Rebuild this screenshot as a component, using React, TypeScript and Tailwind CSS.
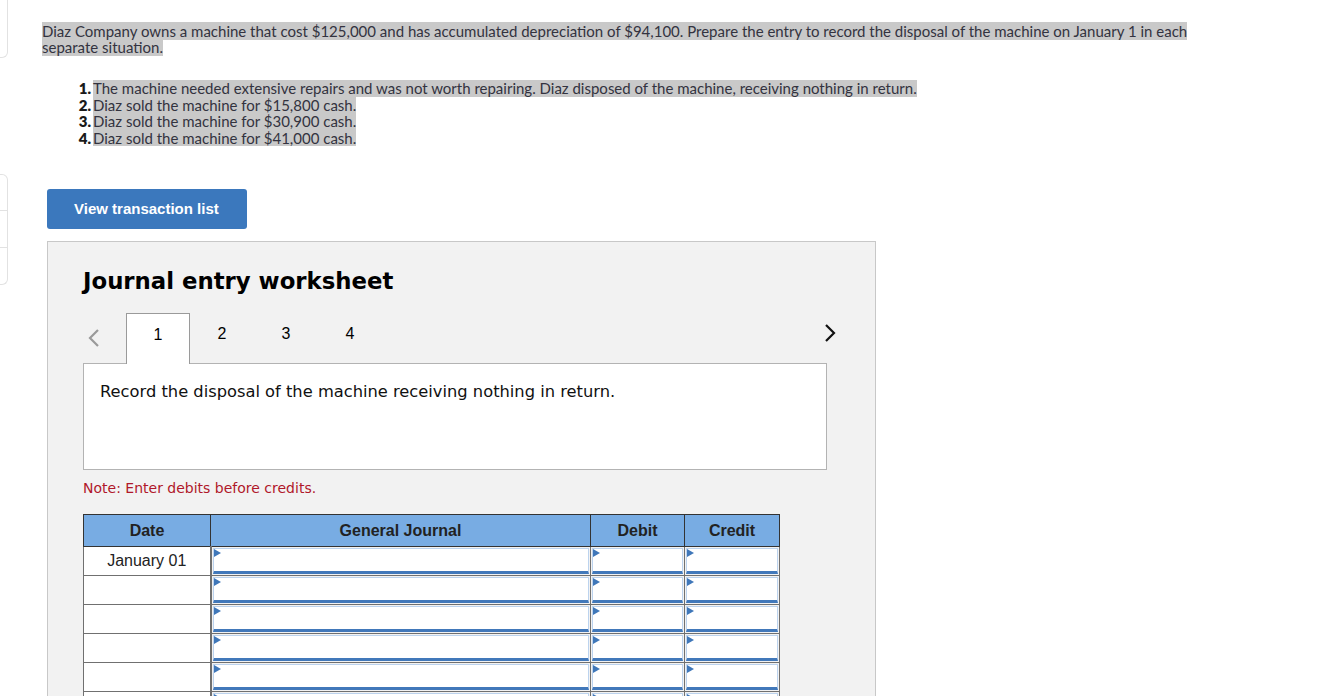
import React from "react";

const Tri = () => (
  <span className="absolute left-0 top-0 w-0 h-0 border-t-[4px] border-b-[4px] border-l-[7px] border-t-transparent border-b-transparent border-l-[#3f77b9]" />
);

const InputCell = () => (
  <td className="border border-[#707070] p-[1px] h-[28.6px] align-top">
    <div className="relative h-[26px] bg-white border border-[#bcd3ee] border-b-[3px] border-b-[#4178ba]">
      <Tri />
    </div>
  </td>
);

export default function App() {
  const rows = [0, 1, 2, 3, 4, 5];
  return (
    <div className="relative w-[1338px] h-[696px] overflow-hidden bg-white">
      {/* left edge tabs */}
      <div className="absolute left-0 top-[-10px] w-[8px] h-[68px] border border-l-0 border-[#e2e2e2] rounded-br-[6px]" />
      <div className="absolute left-0 top-[174px] w-[8px] flex flex-col">
        <div className="h-[37px] border border-l-0 border-[#e2e2e2] rounded-tr-[6px]" />
        <div className="h-[37px] border border-l-0 border-t-0 border-[#e2e2e2]" />
        <div className="h-[37px] border border-l-0 border-t-0 border-[#e2e2e2] rounded-br-[6px]" />
      </div>

      <div className="pl-[42px] pt-[23px]">
        <p
          className="w-[1148px] text-[15px] leading-[16px] text-[#333340]"
          style={{ fontFamily: "Lato, 'Open Sans', sans-serif" }}
        >
          <span className="bg-[#c9c9c9]">
            <span className="relative">
              Diaz Company owns a machine that cost $125,000 and has accumulated depreciation of $94,100. Prepare the entry to record the disposal of the machine on January 1 in each separate situation.
            </span>
          </span>
        </p>

        <div
          className="mt-[25px] flex flex-col text-[15px] leading-[16.6px] text-[#333340]"
          style={{ fontFamily: "Lato, 'Open Sans', sans-serif" }}
        >
          {[
            "The machine needed extensive repairs and was not worth repairing. Diaz disposed of the machine, receiving nothing in return.",
            "Diaz sold the machine for $15,800 cash.",
            "Diaz sold the machine for $30,900 cash.",
            "Diaz sold the machine for $41,000 cash.",
          ].map((t, i) => (
            <div key={i} className="flex">
              <span className="w-[51px] text-right pr-[2px] font-extrabold text-[#1a1a1a]">{i + 1}.</span>
              <span className="bg-[#c9c9c9]">
                <span className="relative">{t}</span>
              </span>
            </div>
          ))}
        </div>

        <button
          className="mt-[43px] ml-[5px] w-[200px] h-[40px] rounded-[3px] bg-[#3b78bd] text-white text-[15px] font-bold text-left pl-[27px]"
          style={{ fontFamily: "'Liberation Sans', Arial, sans-serif" }}
        >
          View transaction list
        </button>

        <div className="mt-[12px] ml-[5px] w-[829px] h-[480px] bg-[#f2f2f2] border border-[#c8c8c8] pl-[35px] pr-[48px] pt-[25px]">
          <h2
            className="text-[22.8px] leading-[28px] font-bold text-black"
            style={{ fontFamily: "Verdana, 'DejaVu Sans', sans-serif" }}
          >
            Journal entry worksheet
          </h2>

          <div
            className="mt-[18px] flex items-end h-[50px] text-[16px]"
            style={{ fontFamily: "'Liberation Sans', Arial, sans-serif" }}
          >
            <div className="w-[43px] h-full flex items-center pl-[4px]">
              <svg width="14" height="20" viewBox="0 0 14 20">
                <path d="M11 2 L3 10 L11 18" fill="none" stroke="#9a9a9a" strokeWidth="2.2" />
              </svg>
            </div>
            <div className="w-[64px] h-[51px] bg-white border border-b-0 border-[#9a9a9a] flex items-center justify-center text-black -mb-[1px] relative z-10 pb-[8px]">
              1
            </div>
            {[2, 3, 4].map((n) => (
              <div key={n} className="w-[64px] h-full flex items-center justify-center pb-[8px] text-black">
                {n}
              </div>
            ))}
            <div className="flex-1" />
            <div className="h-full flex items-center pb-[10px] -mr-[10px]">
              <svg width="14" height="20" viewBox="0 0 14 20">
                <path d="M3 2 L11 10 L3 18" fill="none" stroke="#111" strokeWidth="2.2" />
              </svg>
            </div>
          </div>

          <div
            className="h-[107px] bg-white border border-[#b3b3b3] pl-[16px] pt-[18px] text-[16.3px] leading-[20px] text-[#111]"
            style={{ fontFamily: "Verdana, 'DejaVu Sans', sans-serif" }}
          >
            Record the disposal of the machine receiving nothing in return.
          </div>

          <p
            className="mt-[10px] text-[14px] leading-[17px] text-[#b0182a]"
            style={{ fontFamily: "Verdana, 'DejaVu Sans', sans-serif" }}
          >
            Note: Enter debits before credits.
          </p>

          <table
            className="mt-[17px] w-[696px] border-collapse table-fixed"
            style={{ fontFamily: "'Liberation Sans', Arial, sans-serif" }}
          >
            <colgroup>
              <col className="w-[127px]" />
              <col className="w-[380px]" />
              <col className="w-[94px]" />
              <col className="w-[95px]" />
            </colgroup>
            <thead>
              <tr className="bg-[#78ace3] h-[32px] text-[16px] font-bold text-[#222]">
                <th className="border border-[#333] font-bold">Date</th>
                <th className="border border-[#333] font-bold">General Journal</th>
                <th className="border border-[#333] font-bold">Debit</th>
                <th className="border border-[#333] font-bold">Credit</th>
              </tr>
            </thead>
            <tbody>
              {rows.map((r) => (
                <tr key={r}>
                  <td className="border border-[#707070] border-r-2 bg-white h-[28.6px] text-center text-[16px] text-[#222]">
                    {r === 0 ? "January 01" : ""}
                  </td>
                  <InputCell />
                  <InputCell />
                  <InputCell />
                </tr>
              ))}
            </tbody>
          </table>
        </div>
      </div>
    </div>
  );
}
